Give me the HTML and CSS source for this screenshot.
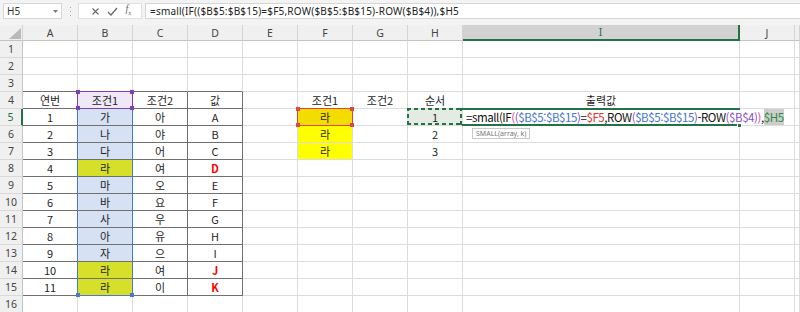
FILE: index.html
```html
<!DOCTYPE html>
<html lang="ko">
<head>
    <meta charset="UTF-8">
    <title>Sheet</title>
    <link rel="stylesheet" href="styles.css">
</head>
<body>
    <div class="ribbon">
        <div class="namebox">
            <span>H5</span>
            <svg class="caret" width="5" height="3" viewBox="0 0 5 3"><path d="M0 0h5L2.5 3z" fill="#777"/></svg>
        </div>
        <svg class="grip" width="3" height="11" viewBox="0 0 3 11">
            <rect x="1" y="1" width="1" height="1" fill="#a8a8a8"/>
            <rect x="1" y="5" width="1" height="1" fill="#a8a8a8"/>
            <rect x="1" y="9" width="1" height="1" fill="#a8a8a8"/>
        </svg>
        <div class="fxbtns">
            <svg width="9" height="9" viewBox="0 0 9 9"><path d="M1.5 1.5l6 6M7.5 1.5l-6 6" stroke="#666" stroke-width="1.1"/></svg>
            <svg width="11" height="9" viewBox="0 0 11 9"><path d="M1 5l3 3 6-7" stroke="#666" stroke-width="1.2" fill="none"/></svg>
            <span class="fx">f<sub>x</sub></span>
        </div>
        <div class="fbar">=small(IF(($B$5:$B$15)=$F5,ROW($B$5:$B$15)-ROW($B$4)),$H5</div>
    </div>

    <table class="sheet">
        <colgroup>
            <col class="w-hd">
            <col class="w-n"><col class="w-n"><col class="w-n"><col class="w-n">
            <col class="w-n"><col class="w-n"><col class="w-n"><col class="w-n">
            <col class="w-i"><col class="w-n"><col class="w-k">
        </colgroup>
        <tr class="colhead">
            <th class="corner"><svg width="12" height="11" viewBox="0 0 12 11"><path d="M12 0v11H0z" fill="#b9b9b9"/></svg></th>
            <th>A</th><th>B</th><th>C</th><th>D</th><th>E</th><th>F</th><th>G</th><th>H</th><th class="cur">I</th><th>J</th><th></th>
        </tr>
        <tr><th>1</th><td></td><td></td><td></td><td></td><td></td><td></td><td></td><td></td><td></td><td></td><td></td></tr>
        <tr><th>2</th><td></td><td></td><td></td><td></td><td></td><td></td><td></td><td></td><td></td><td></td><td></td></tr>
        <tr><th>3</th><td class="tt"></td><td class="tt pb"></td><td class="tt"></td><td class="tt"></td><td></td><td></td><td></td><td></td><td></td><td></td><td></td></tr>
        <tr>
            <th>4</th>
            <td class="t pl">연번</td>
            <td class="t pu">조건1<i class="k tl"></i><i class="k tr"></i><i class="k bl"></i><i class="k br"></i></td>
            <td class="t">조건2</td>
            <td class="t">값</td>
            <td></td>
            <td class="rb">조건1</td>
            <td>조건2</td>
            <td>순서</td>
            <td>출력값</td>
            <td></td><td></td>
        </tr>
        <tr>
            <th class="cur">5</th>
            <td class="t bl2">1</td><td class="t bf">가</td><td class="t">아</td><td class="t">A</td>
            <td class="rl"></td>
            <td class="rd">라<i class="k tl"></i><i class="k tr"></i><i class="k bl"></i><i class="k br"></i></td>
            <td></td>
            <td class="marq">1</td>
            <td class="edit">
                <span class="ftext">=small(IF<b class="pk">(</b><b class="pp">(</b><b class="bu">$B$5:$B$15</b><b class="pp">)</b>=<b class="rdx">$F5</b>,ROW<b class="pp">(</b><b class="bu">$B$5:$B$15</b><b class="pp">)</b>-ROW<b class="pp">(</b><b class="pp">$B$4</b><b class="pp">)</b><b class="pk">)</b>,<b class="gr">$H5</b></span>
                <span class="tip">SMALL(array, k)</span>
                <i class="fill"></i>
            </td>
            <td></td><td></td>
        </tr>
        <tr><th>6</th><td class="t bl2">2</td><td class="t bf">나</td><td class="t">야</td><td class="t">B</td><td></td><td class="ye">라</td><td></td><td>2</td><td></td><td></td><td></td></tr>
        <tr><th>7</th><td class="t bl2">3</td><td class="t bf">다</td><td class="t">어</td><td class="t">C</td><td></td><td class="ye">라</td><td></td><td>3</td><td></td><td></td><td></td></tr>
        <tr><th>8</th><td class="t bl2">4</td><td class="t bf yl">라</td><td class="t">여</td><td class="t red">D</td><td></td><td></td><td></td><td></td><td></td><td></td><td></td></tr>
        <tr><th>9</th><td class="t bl2">5</td><td class="t bf">마</td><td class="t">오</td><td class="t">E</td><td></td><td></td><td></td><td></td><td></td><td></td><td></td></tr>
        <tr><th>10</th><td class="t bl2">6</td><td class="t bf">바</td><td class="t">요</td><td class="t">F</td><td></td><td></td><td></td><td></td><td></td><td></td><td></td></tr>
        <tr><th>11</th><td class="t bl2">7</td><td class="t bf">사</td><td class="t">우</td><td class="t">G</td><td></td><td></td><td></td><td></td><td></td><td></td><td></td></tr>
        <tr><th>12</th><td class="t bl2">8</td><td class="t bf">아</td><td class="t">유</td><td class="t">H</td><td></td><td></td><td></td><td></td><td></td><td></td><td></td></tr>
        <tr><th>13</th><td class="t bl2">9</td><td class="t bf">자</td><td class="t">으</td><td class="t">I</td><td></td><td></td><td></td><td></td><td></td><td></td><td></td></tr>
        <tr><th>14</th><td class="t bl2">10</td><td class="t bf yl">라</td><td class="t">여</td><td class="t red">J</td><td></td><td></td><td></td><td></td><td></td><td></td><td></td></tr>
        <tr><th>15</th><td class="t bl2">11</td><td class="t bf yl bb">라<i class="k bl"></i><i class="k br"></i></td><td class="t">이</td><td class="t red">K</td><td></td><td></td><td></td><td></td><td></td><td></td><td></td></tr>
        <tr><th>16</th><td></td><td></td><td></td><td></td><td></td><td></td><td></td><td></td><td></td><td></td><td></td></tr>
    </table>
</body>
</html>
```

FILE: styles.css
```css
* {
    margin: 0;
    padding: 0;
    box-sizing: border-box;
}
body {
    width: 800px;
    height: 312px;
    overflow: hidden;
    background: #fff;
    font-family: "Noto Sans CJK KR", "Noto Sans", sans-serif;
    color: #1e1e1e;
}

/* formula bar */
.ribbon {
    height: 25px;
    background: #f3f3f3;
    display: flex;
    align-items: flex-start;
    padding: 3px 0 0 3px;
}
.namebox {
    width: 59px;
    height: 16px;
    background: #fff;
    border: 1px solid #d6d6d6;
    display: flex;
    align-items: center;
    justify-content: space-between;
    padding: 0 3px 0 3px;
    font-family: "Noto Sans", sans-serif;
    font-size: 10px;
    color: #333;
}
.grip {
    margin: 3px 6px 0 7px;
}
.fxbtns {
    width: 64px;
    height: 16px;
    background: #fff;
    border: 1px solid #e0e0e0;
    display: flex;
    align-items: center;
    justify-content: space-around;
    padding: 0 6px 0 8px;
}
.fx {
    font-family: "Liberation Serif", serif;
    font-style: italic;
    font-size: 10px;
    color: #666;
    line-height: 10px;
}
.fx sub {
    font-size: 7px;
}
.fbar {
    flex: 1;
    height: 16px;
    margin-left: 3px;
    background: #fff;
    border: 1px solid #d6d6d6;
    border-right: none;
    padding-left: 4px;
    font-family: "Noto Sans", sans-serif;
    font-size: 10px;
    letter-spacing: 0.2px;
    line-height: 14px;
    color: #222;
    white-space: nowrap;
}

/* grid */
.sheet {
    border-collapse: separate;
    border-spacing: 0;
    table-layout: fixed;
    width: 800px;
}
.w-hd { width: 23px; }
.w-n { width: 55px; }
.w-i { width: 277px; }
.w-k { width: 5px; }
.sheet tr {
    height: 17px;
}
.sheet th,
.sheet td {
    padding: 0;
    border-right: 1px solid #dcdcdc;
    border-bottom: 1px solid #dcdcdc;
    text-align: center;
    font-size: 11px;
    line-height: 14px;
    font-weight: normal;
    white-space: nowrap;
    overflow: visible;
}
.sheet th {
    background: #f0f0f0;
    color: #444;
    font-family: "Noto Sans", sans-serif;
    font-size: 10.5px;
    border-right-color: #c4c4c4;
    border-bottom-color: #d9d9d9;
}
.sheet .colhead {
    height: 15px;
}
.colhead th {
    border-right-color: #d4d4d4;
    border-bottom-color: #c4c4c4;
    vertical-align: middle;
}
.colhead .corner {
    text-align: right;
    vertical-align: bottom;
    padding: 0 1px 1px 0;
    line-height: 0;
}
.colhead th.cur {
    background: #d2d2d2;
    border-bottom: 2px solid #217346;
}
.sheet th.cur {
    color: #217346;
    border-right: 2px solid #217346;
}

/* data table */
.sheet .tt { border-bottom-color: #707070; }
.sheet .t {
    border-right-color: #707070;
    border-bottom-color: #707070;
}
.sheet .red {
    color: #ff0000;
    font-weight: bold;
}

/* range highlights */
.k {
    position: absolute;
    z-index: 3;
    width: 4px;
    height: 4px;
}
.k.tl { left: -2px; top: -2px; }
.k.tr { right: -2px; top: -2px; }
.k.bl { left: -2px; bottom: -2px; }
.k.br { right: -2px; bottom: -2px; }

.sheet .pl { border-right-color: #7e3fb3; }
.sheet .pb { border-bottom-color: #7e3fb3; }
.sheet .pu {
    position: relative;
    background: #efe8f6;
    border-right-color: #7e3fb3;
    border-bottom-color: #7e3fb3;
}
.pu .k { background: #7e3fb3; }

.sheet .bl2 { border-right-color: #4a78cf; }
.sheet .bf {
    background: #d6e1f3;
    border-right-color: #4a78cf;
}
.sheet .yl { background: #d6e02a; }
.sheet .bb {
    position: relative;
    border-bottom-color: #4a78cf;
}
.bb .k { background: #4a78cf; }

.sheet .rl { border-right-color: #e04545; }
.sheet .rb { border-bottom-color: #e04545; }
.sheet .rd {
    position: relative;
    background: #f3dd00;
    border-right-color: #e04545;
    border-bottom-color: #e04545;
}
.rd .k { background: #e04545; }
.sheet .ye { background: #ffff00; }

.sheet .marq {
    position: relative;
    background: #e3ebe3;
}
.marq::after {
    content: "";
    position: absolute;
    z-index: 4;
    left: -1px;
    top: -1px;
    right: 0;
    bottom: 0;
    background:
        repeating-linear-gradient(90deg, #217346 0 4px, transparent 4px 7px) top / 100% 2px no-repeat,
        repeating-linear-gradient(90deg, #217346 0 4px, transparent 4px 7px) bottom / 100% 2px no-repeat,
        repeating-linear-gradient(0deg, #217346 0 4px, transparent 4px 7px) left / 2px 100% no-repeat,
        repeating-linear-gradient(0deg, #217346 0 4px, transparent 4px 7px) right / 2px 100% no-repeat;
}

/* cell in edit mode */
.sheet .edit {
    position: relative;
    text-align: left;
    padding-left: 3px;
}
.edit::before {
    content: "";
    position: absolute;
    z-index: 1;
    left: -1px;
    top: -1px;
    right: -1px;
    bottom: -1px;
    border-top: 2px solid #217346;
    border-bottom: 2px solid #217346;
}
.ftext {
    position: relative;
    z-index: 2;
    display: inline-block;
    background: #fff;
    padding-right: 2px;
    font-size: 11.5px;
    letter-spacing: -0.42px;
    color: #111;
}
.ftext b { font-weight: normal; }
.ftext .pk { color: #d2419b; }
.ftext .pp { color: #8a4cc8; }
.ftext .bu { color: #3f72d6; }
.ftext .rdx { color: #e5322d; }
.ftext .gr {
    color: #2c8a3c;
    background: #cdcdcd;
}
.tip {
    position: absolute;
    z-index: 5;
    left: 9px;
    top: 19px;
    height: 11px;
    padding: 0 3px;
    background: #fff;
    border: 1px solid #c8c8c8;
    font-family: "Noto Sans", sans-serif;
    font-size: 7px;
    line-height: 9px;
    color: #777;
}
.fill {
    position: absolute;
    z-index: 5;
    right: -3px;
    bottom: -3px;
    width: 5px;
    height: 5px;
    background: #217346;
    border: 1px solid #fff;
}
```
